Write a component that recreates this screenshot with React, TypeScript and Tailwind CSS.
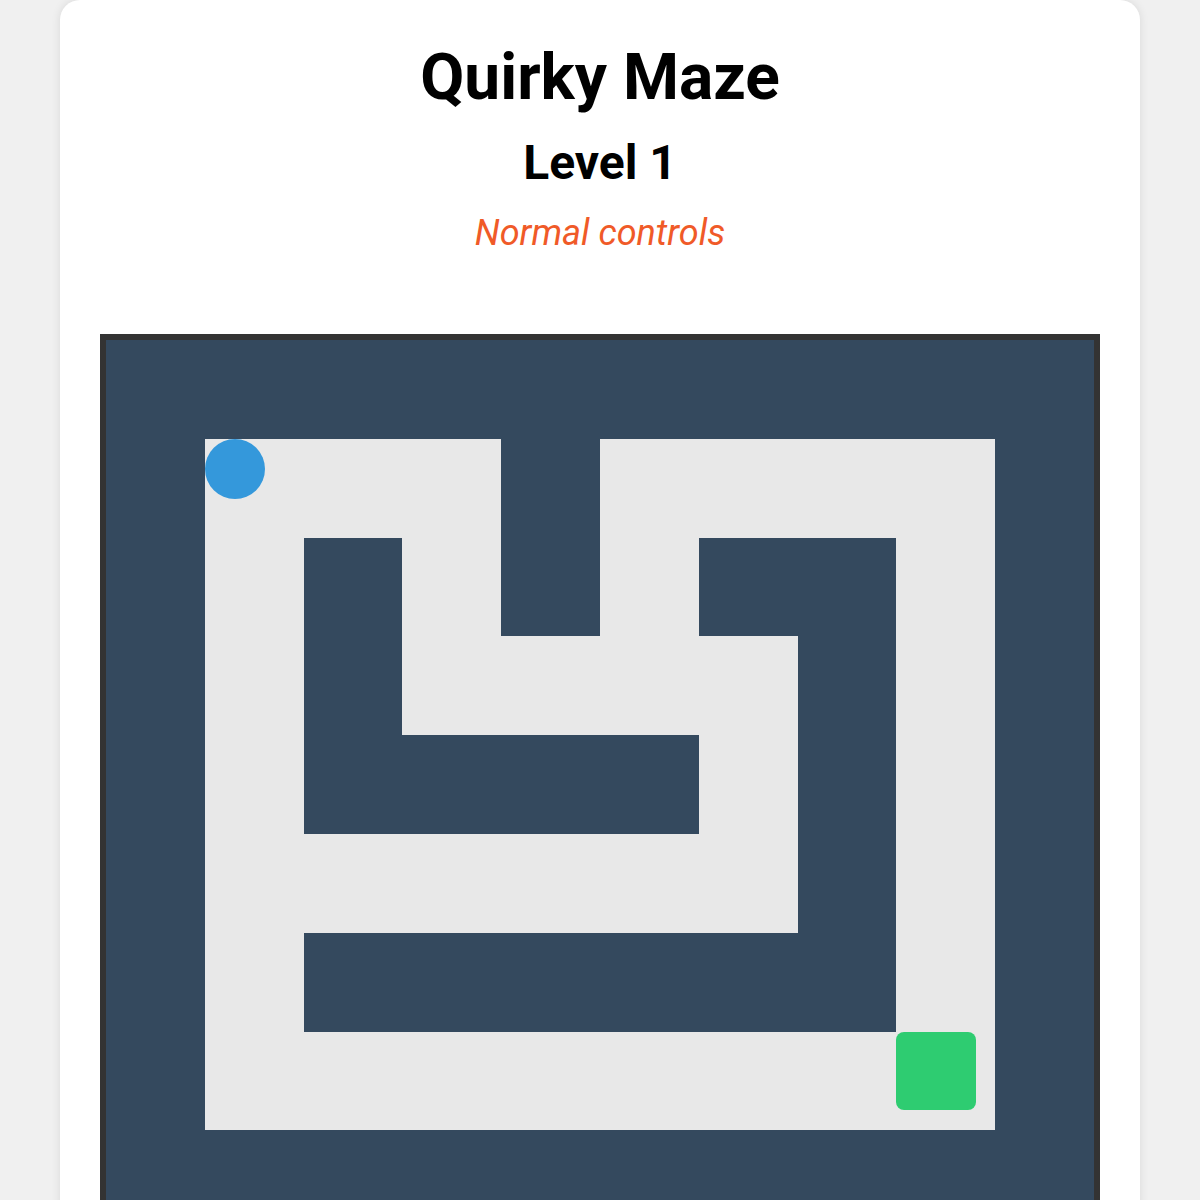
import React from 'react';

// 1 = wall, 0 = path
const MAZE: number[][] = [
  [1, 1, 1, 1, 1, 1, 1, 1, 1, 1],
  [1, 0, 0, 0, 1, 0, 0, 0, 0, 1],
  [1, 0, 1, 0, 1, 0, 1, 1, 0, 1],
  [1, 0, 1, 0, 0, 0, 0, 1, 0, 1],
  [1, 0, 1, 1, 1, 1, 0, 1, 0, 1],
  [1, 0, 0, 0, 0, 0, 0, 1, 0, 1],
  [1, 0, 1, 1, 1, 1, 1, 1, 0, 1],
  [1, 0, 0, 0, 0, 0, 0, 0, 0, 1],
  [1, 1, 1, 1, 1, 1, 1, 1, 1, 1],
  [1, 1, 1, 1, 1, 1, 1, 1, 1, 1],
];

const PLAYER = { row: 1, col: 1 };
const GOAL = { row: 7, col: 8 };

const App: React.FC = () => {
  return (
    <div className="min-h-screen bg-[#f0f0f0] font-['Roboto',sans-serif]">
      <div className="mx-auto w-[1080px] bg-white rounded-[20px] shadow-[0_0_10px_rgba(0,0,0,0.1)] px-10 pt-[40px] pb-10">
        {/* Header */}
        <h1 className="text-center text-[64px] font-bold leading-[76px] text-black">Quirky Maze</h1>
        <h2 className="text-center text-[48px] font-bold leading-[56px] text-black mt-[19px]">Level 1</h2>
        <p className="text-center text-[36px] italic leading-[42px] text-[#f05a28] mt-[21px]">Normal controls</p>

        {/* Maze board */}
        <div className="mt-[80px] border-[6px] border-[#333333] bg-[#34495e]">
          <div className="grid grid-cols-10 grid-rows-[repeat(10,98.8px)]">
            {MAZE.map((row, r) =>
              row.map((cell, c) => (
                <div
                  key={`${r}-${c}`}
                  className={`relative ${cell === 1 ? 'bg-[#34495e]' : 'bg-[#e8e8e8]'}`}
                >
                  {r === PLAYER.row && c === PLAYER.col && (
                    <div className="absolute left-0 top-0 w-[60px] h-[60px] rounded-full bg-[#3498db]" />
                  )}
                  {r === GOAL.row && c === GOAL.col && (
                    <div className="absolute left-0 top-0 w-[80px] h-[78px] rounded-lg bg-[#2ecc71]" />
                  )}
                </div>
              ))
            )}
          </div>
        </div>
      </div>
    </div>
  );
};

export default App;
